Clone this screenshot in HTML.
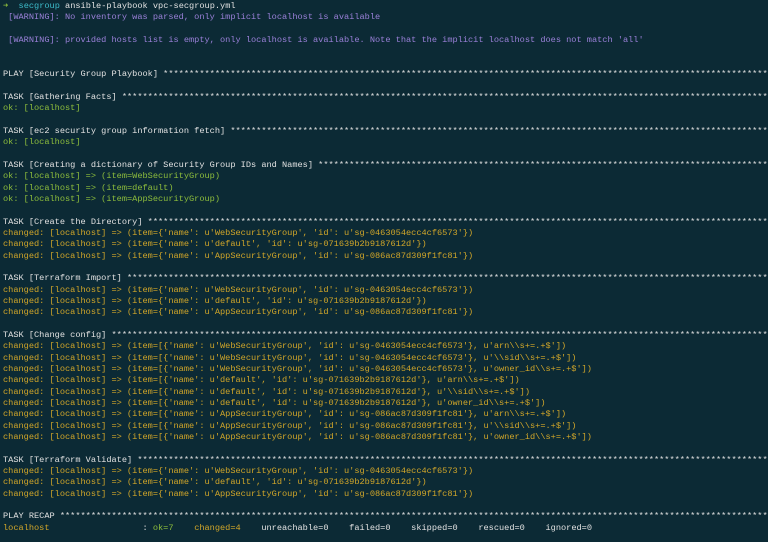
<!DOCTYPE html>
<html><head><meta charset="utf-8"><style>
html,body{margin:0;padding:0;background:#0c2a35;width:768px;height:542px;overflow:hidden}
pre{margin:0;padding:1px 0 0 3px;font-family:"Liberation Mono","DejaVu Sans Mono",monospace;font-size:8.62px;line-height:11.35px;color:#e2e2e2;white-space:pre;overflow:hidden;width:765px}
.p{color:#9a80d8}.g{color:#8dbd3c}.y{color:#d1a629}.c{color:#3dbccb}.a{color:#8dbd3c}
</style></head><body><pre><span class="a">➜</span>  <span class="c">secgroup</span> ansible-playbook vpc-secgroup.yml
<span class="p"> [WARNING]: No inventory was parsed, only implicit localhost is available</span>

<span class="p"> [WARNING]: provided hosts list is empty, only localhost is available. Note that the implicit localhost does not match 'all'</span>


PLAY [Security Group Playbook] ******************************************************************************************************************************

TASK [Gathering Facts] **************************************************************************************************************************************
<span class="g">ok: [localhost]</span>

TASK [ec2 security group information fetch] *****************************************************************************************************************
<span class="g">ok: [localhost]</span>

TASK [Creating a dictionary of Security Group IDs and Names] ************************************************************************************************
<span class="g">ok: [localhost] =&gt; (item=WebSecurityGroup)
ok: [localhost] =&gt; (item=default)
ok: [localhost] =&gt; (item=AppSecurityGroup)</span>

TASK [Create the Directory] *********************************************************************************************************************************
<span class="y">changed: [localhost] =&gt; (item={'name': u'WebSecurityGroup', 'id': u'sg-0463054ecc4cf6573'})
changed: [localhost] =&gt; (item={'name': u'default', 'id': u'sg-071639b2b9187612d'})
changed: [localhost] =&gt; (item={'name': u'AppSecurityGroup', 'id': u'sg-086ac87d309f1fc81'})</span>

TASK [Terraform Import] *************************************************************************************************************************************
<span class="y">changed: [localhost] =&gt; (item={'name': u'WebSecurityGroup', 'id': u'sg-0463054ecc4cf6573'})
changed: [localhost] =&gt; (item={'name': u'default', 'id': u'sg-071639b2b9187612d'})
changed: [localhost] =&gt; (item={'name': u'AppSecurityGroup', 'id': u'sg-086ac87d309f1fc81'})</span>

TASK [Change config] ****************************************************************************************************************************************
<span class="y">changed: [localhost] =&gt; (item=[{'name': u'WebSecurityGroup', 'id': u'sg-0463054ecc4cf6573'}, u'arn\\s+=.+$'])
changed: [localhost] =&gt; (item=[{'name': u'WebSecurityGroup', 'id': u'sg-0463054ecc4cf6573'}, u'\\sid\\s+=.+$'])
changed: [localhost] =&gt; (item=[{'name': u'WebSecurityGroup', 'id': u'sg-0463054ecc4cf6573'}, u'owner_id\\s+=.+$'])
changed: [localhost] =&gt; (item=[{'name': u'default', 'id': u'sg-071639b2b9187612d'}, u'arn\\s+=.+$'])
changed: [localhost] =&gt; (item=[{'name': u'default', 'id': u'sg-071639b2b9187612d'}, u'\\sid\\s+=.+$'])
changed: [localhost] =&gt; (item=[{'name': u'default', 'id': u'sg-071639b2b9187612d'}, u'owner_id\\s+=.+$'])
changed: [localhost] =&gt; (item=[{'name': u'AppSecurityGroup', 'id': u'sg-086ac87d309f1fc81'}, u'arn\\s+=.+$'])
changed: [localhost] =&gt; (item=[{'name': u'AppSecurityGroup', 'id': u'sg-086ac87d309f1fc81'}, u'\\sid\\s+=.+$'])
changed: [localhost] =&gt; (item=[{'name': u'AppSecurityGroup', 'id': u'sg-086ac87d309f1fc81'}, u'owner_id\\s+=.+$'])</span>

TASK [Terraform Validate] ***********************************************************************************************************************************
<span class="y">changed: [localhost] =&gt; (item={'name': u'WebSecurityGroup', 'id': u'sg-0463054ecc4cf6573'})
changed: [localhost] =&gt; (item={'name': u'default', 'id': u'sg-071639b2b9187612d'})
changed: [localhost] =&gt; (item={'name': u'AppSecurityGroup', 'id': u'sg-086ac87d309f1fc81'})</span>

PLAY RECAP **************************************************************************************************************************************************
<span class="y">localhost</span>                  : <span class="g">ok=7</span>    <span class="y">changed=4</span>    unreachable=0    failed=0    skipped=0    rescued=0    ignored=0
</pre></body></html>
